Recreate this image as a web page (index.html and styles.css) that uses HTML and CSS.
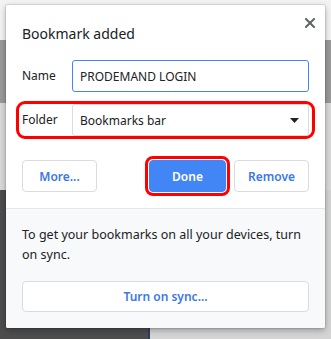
FILE: index.html
```html
<!DOCTYPE html>
<html lang="en">
<head>
<meta charset="utf-8">
<title>Bookmark added</title>
<link rel="stylesheet" href="styles.css">
</head>
<body>
<div class="dialog">
  <div class="main">
    <div class="header">
      <h1 class="title">Bookmark added</h1>
      <button class="close" aria-label="Close">
        <svg width="10" height="10" viewBox="0 0 10 10"><path d="M1 1L9 9M9 1L1 9" stroke="#5f6368" stroke-width="2" stroke-linecap="square"/></svg>
      </button>
    </div>
    <div class="field">
      <span class="label">Name</span>
      <div class="input focused">PRODEMAND LOGIN</div>
    </div>
    <div class="field highlight">
      <span class="label">Folder</span>
      <div class="input select">
        <span>Bookmarks bar</span>
        <svg width="9" height="5" viewBox="0 0 9 5"><path d="M0 0H9L4.5 5Z" fill="#202124"/></svg>
      </div>
    </div>
    <div class="actions">
      <button class="btn">More...</button>
      <span class="spacer"></span>
      <button class="btn primary marked">Done</button>
      <button class="btn">Remove</button>
    </div>
  </div>
  <div class="footer">
    <p class="promo">To get your bookmarks on all your devices, turn on sync.</p>
    <button class="btn wide">Turn on sync...</button>
  </div>
</div>
</body>
</html>
```
FILE: styles.css
```css
html, body {
  margin: 0;
  padding: 0;
}
body {
  width: 331px;
  height: 339px;
  overflow: hidden;
  font-family: "Noto Sans", "Open Sans", sans-serif;
  color: #202124;
  background:
    linear-gradient(to right, #4d4d4d 0 148px, #2c3f5a 148px 150px, #d4d4d4 150px) 0 190px / 100% 149px no-repeat,
    linear-gradient(#f3f3f3 0 40px, #9a9a9a 40px 103px, #d9d9d9 103px 190px) 0 0 / 100% 190px no-repeat;
}
.dialog {
  margin: 5px 6px 0;
  width: 319px;
  background: #fff;
  border-radius: 2px;
  box-shadow: 0 0 0 1px rgba(0,0,0,0.08), 0 2px 6px rgba(0,0,0,0.3);
  overflow: hidden;
}
.main {
  padding: 0 16px 16px;
}
.header {
  display: flex;
  justify-content: space-between;
  align-items: flex-start;
  padding-top: 13px;
  margin-right: -6px;
}
.title {
  margin: 6px 0 0;
  font-size: 14px;
  line-height: 20px;
  font-weight: 400;
  color: #202124;
}
.close {
  border: 0;
  padding: 0;
  background: none;
  width: 10px;
  height: 10px;
  display: block;
}
.close svg { display: block; }
.field {
  display: flex;
  align-items: center;
  margin-top: 16px;
}
.label {
  width: 50px;
  flex: none;
  font-size: 12px;
  line-height: 20px;
}
.input {
  flex: 1;
  height: 32px;
  box-sizing: border-box;
  border: 1px solid #dadce0;
  border-radius: 3px;
  padding: 0 7px;
  display: flex;
  align-items: center;
  font-size: 12px;
}
.input.focused {
  border-color: #4285f4;
}
.select {
  justify-content: space-between;
  padding-right: 9px;
}
.highlight {
  margin: 9px -6px 0;
  border: 3px solid #ff0000;
  border-radius: 9px;
  padding: 0 3px;
}
.actions {
  display: flex;
  align-items: center;
  gap: 8px;
  margin-top: 21px;
}
.spacer { flex: 1; }
.btn {
  font-family: "Noto Sans", "Open Sans", sans-serif;
  font-size: 12px;
  font-weight: 600;
  color: #3b78e7;
  background: #fff;
  border: 1px solid #dadce0;
  border-radius: 4px;
  height: 32px;
  width: 75px;
  padding: 0;
}
.btn.primary {
  width: 77px;
  background: #4285f4;
  border-color: #4285f4;
  color: #fff;
}
.btn.marked {
  outline: 3px solid #ff0000;
  outline-offset: 1px;
}
.footer {
  background: #f8f9fa;
  border-top: 1px solid #e4e6e8;
  padding: 16px 16px 16px;
}
.promo {
  margin: 0;
  font-size: 12.5px;
  line-height: 20px;
  color: #202124;
}
.btn.wide {
  display: block;
  width: 100%;
  height: 31px;
  margin-top: 16px;
}
```
